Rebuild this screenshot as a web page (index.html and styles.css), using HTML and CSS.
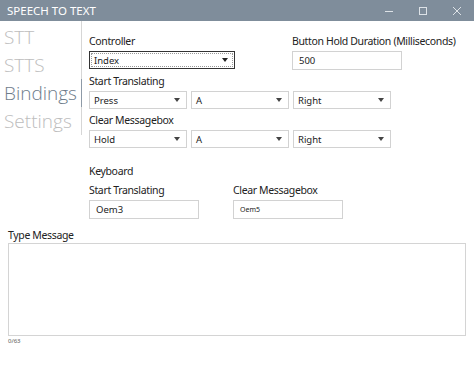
FILE: index.html
```html
<!DOCTYPE html>
<html lang="en">
<head>
    <meta charset="UTF-8">
    <title>Speech To Text</title>
    <link rel="stylesheet" href="styles.css">
</head>
<body>
    <div class="window">
        <div class="titlebar">
            <span class="title">SPEECH TO TEXT</span>
            <div class="window-buttons">
                <svg width="10" height="10" viewBox="0 0 10 10"><path d="M1 5.5h8" stroke="#dde2e7" stroke-width="1"/></svg>
                <svg width="10" height="10" viewBox="0 0 10 10"><rect x="1.5" y="1.5" width="7" height="7" fill="none" stroke="#dde2e7" stroke-width="1"/></svg>
                <svg width="10" height="10" viewBox="0 0 10 10"><path d="M1 1l8 8M9 1l-8 8" stroke="#dde2e7" stroke-width="1"/></svg>
            </div>
        </div>

        <div class="main">
            <nav class="sidebar">
                <div class="nav-item first">STT</div>
                <div class="nav-item">STTS</div>
                <div class="nav-item active">Bindings</div>
                <div class="nav-item">Settings</div>
            </nav>

            <div class="content">
                <div class="row">
                    <div class="field">
                        <label>Controller</label>
                        <div class="select wide focused"><span>Index</span><svg width="6" height="4" viewBox="0 0 6 4"><path d="M0 0h6L3 4z" fill="#222"/></svg></div>
                    </div>
                    <div class="field duration">
                        <label>Button Hold Duration (Milliseconds)</label>
                        <div class="textbox">500</div>
                    </div>
                </div>

                <div class="field">
                    <label>Start Translating</label>
                    <div class="select-row">
                        <div class="select"><span>Press</span><svg width="6" height="4" viewBox="0 0 6 4"><path d="M0 0h6L3 4z" fill="#444"/></svg></div>
                        <div class="select"><span>A</span><svg width="6" height="4" viewBox="0 0 6 4"><path d="M0 0h6L3 4z" fill="#444"/></svg></div>
                        <div class="select"><span>Right</span><svg width="6" height="4" viewBox="0 0 6 4"><path d="M0 0h6L3 4z" fill="#444"/></svg></div>
                    </div>
                </div>

                <div class="field">
                    <label>Clear Messagebox</label>
                    <div class="select-row">
                        <div class="select"><span>Hold</span><svg width="6" height="4" viewBox="0 0 6 4"><path d="M0 0h6L3 4z" fill="#444"/></svg></div>
                        <div class="select"><span>A</span><svg width="6" height="4" viewBox="0 0 6 4"><path d="M0 0h6L3 4z" fill="#444"/></svg></div>
                        <div class="select"><span>Right</span><svg width="6" height="4" viewBox="0 0 6 4"><path d="M0 0h6L3 4z" fill="#444"/></svg></div>
                    </div>
                </div>

                <div class="keyboard">
                    <label>Keyboard</label>
                    <div class="row keys">
                        <div class="field">
                            <label>Start Translating</label>
                            <div class="textbox">Oem3</div>
                        </div>
                        <div class="field">
                            <label>Clear Messagebox</label>
                            <div class="textbox small">Oem5</div>
                        </div>
                    </div>
                </div>
            </div>
        </div>

        <div class="message">
            <label>Type Message</label>
            <div class="message-box"></div>
            <div class="counter">0/63</div>
        </div>
    </div>
</body>
</html>
```

FILE: styles.css
```css
* {
    margin: 0;
    padding: 0;
    box-sizing: border-box;
}
body {
    background: #fff;
    font-family: "Noto Sans", "Open Sans", sans-serif;
    color: #222;
}
.window {
    width: 474px;
    height: 376px;
}
.titlebar {
    height: 21px;
    background: #7f8d9b;
    display: flex;
    align-items: center;
    justify-content: space-between;
    padding-left: 7px;
}
.title {
    color: #fff;
    font-size: 11.5px;
}
.window-buttons {
    display: flex;
    gap: 24px;
    padding-right: 12px;
}
.main {
    display: flex;
    align-items: flex-start;
}
.sidebar {
    width: 82px;
    padding-left: 4px;
}
.nav-item {
    height: 28px;
    line-height: 28px;
    font-family: "Open Sans", sans-serif;
    font-size: 19px;
    font-weight: 300;
    color: #bdbdbd;
    border-right: 1px solid #d6d6d6;
}
.nav-item.first {
    height: 30px;
    padding-top: 2px;
}
.nav-item.active {
    color: #6e7c8b;
    border-right-color: #8e9aa7;
}
.content {
    padding: 12px 0 0 7px;
    flex: 1;
}
label {
    display: block;
    font-size: 10.5px;
    letter-spacing: -0.35px;
    line-height: 16px;
    margin-bottom: 2px;
}
.row {
    display: flex;
    gap: 57px;
}
.field {
    margin-bottom: 3px;
}
.select {
    width: 98px;
    height: 18px;
    border: 1px solid #d2d2d2;
    display: flex;
    align-items: center;
    justify-content: space-between;
    padding: 0 6px 0 4px;
    font-size: 9.5px;
}
.select.wide {
    width: 146px;
}
.select.focused {
    border-color: #333;
    position: relative;
}
.select.focused::after {
    content: "";
    position: absolute;
    inset: 1px;
    border: 1px dotted #999;
}
.select-row {
    display: flex;
    gap: 4px;
}
.textbox {
    width: 110px;
    height: 19px;
    border: 1px solid #d2d2d2;
    font-size: 9.5px;
    line-height: 17px;
    padding-left: 6px;
}
.textbox.small {
    font-size: 7px;
}
.keyboard {
    margin-top: 15px;
}
.keyboard > label {
    margin-bottom: 3px;
}
.keys {
    gap: 34px;
}
.message {
    padding: 5px 8px 0 8px;
}
.message > label {
    margin-bottom: 0;
}
.message-box {
    width: 458px;
    height: 93px;
    border: 1px solid #d4d4d4;
}
.counter {
    font-size: 6px;
    line-height: 8px;
    color: #555;
    margin-top: 1px;
}
```
